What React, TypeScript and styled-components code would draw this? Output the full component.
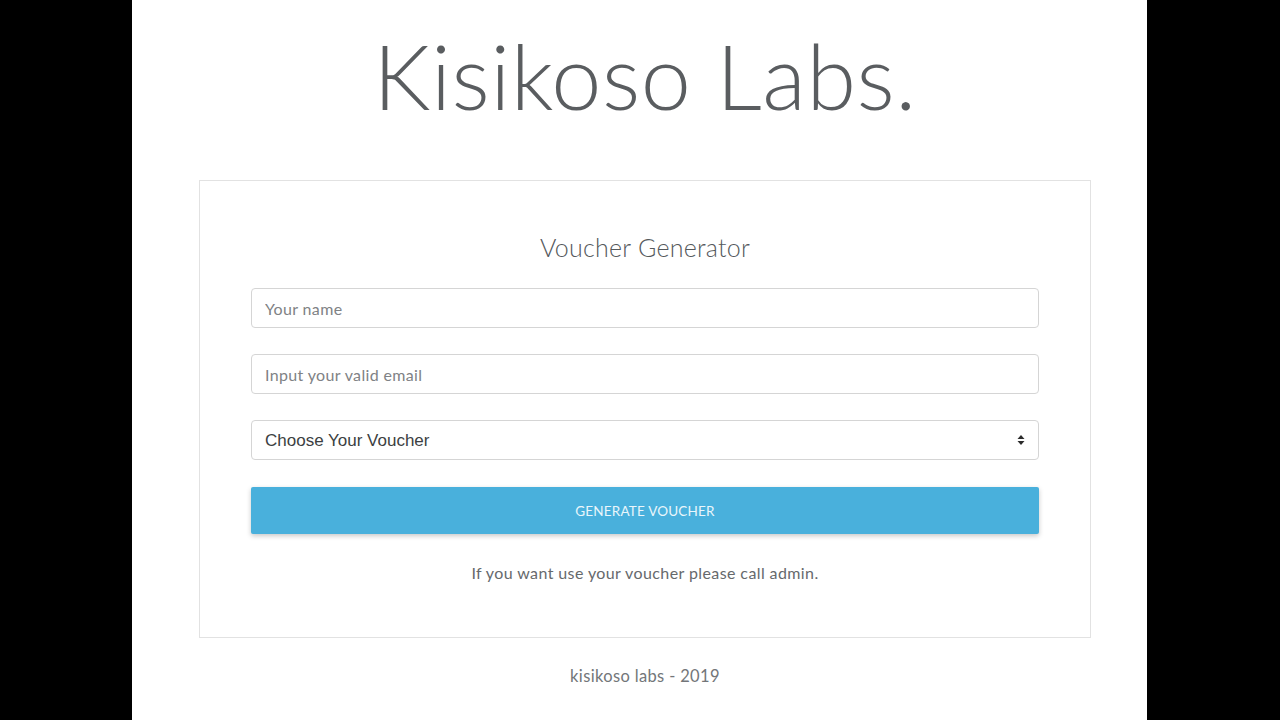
import React from 'react';
import styled, { createGlobalStyle } from 'styled-components';

const GlobalStyle = createGlobalStyle`
  html, body {
    margin: 0;
    padding: 0;
    background: #000;
    font-family: 'Lato', 'Noto Sans', sans-serif;
  }
  * { box-sizing: border-box; }
`;

const Column = styled.div`
  margin-left: 132px;
  width: 1015px;
  min-height: 720px;
  background: #fff;
  padding: 30px 56px 20px 67px;
`;

const Title = styled.h1`
  margin: 0 0 60px;
  font-size: 90px;
  line-height: 90px;
  font-weight: 300;
  color: #5a5d60;
  text-align: center;
  letter-spacing: 0.5px;
`;

const Card = styled.div`
  border: 1px solid #e2e2e2;
  padding: 51px 51px 54px;
  display: flex;
  flex-direction: column;
`;

const CardTitle = styled.h2`
  margin: 0 0 26px;
  font-size: 25px;
  line-height: 30px;
  font-weight: 300;
  letter-spacing: 0.25px;
  color: #55595c;
  text-align: center;
`;

const Field = styled.input`
  height: 40px;
  width: 100%;
  border: 1px solid #d5d5d5;
  border-radius: 4px;
  padding: 0 13px;
  font-family: 'Lato', sans-serif;
  font-size: 16px;
  letter-spacing: 0.35px;
  color: #444;
  margin-bottom: 26px;
  &::placeholder { color: #808285; }
`;

const SelectWrap = styled.div`
  position: relative;
  margin-bottom: 27px;
`;

const Select = styled.select`
  appearance: none;
  height: 40px;
  width: 100%;
  border: 1px solid #d5d5d5;
  border-radius: 4px;
  background: #fff;
  padding: 0 13px;
  font-family: 'Liberation Sans', Arial, sans-serif;
  font-size: 17px;
  color: #3c3f42;
`;

const Arrows = styled.svg`
  position: absolute;
  right: 14px;
  top: 14px;
  pointer-events: none;
`;

const Button = styled.button`
  height: 47px;
  width: 100%;
  border: none;
  border-radius: 2px;
  background: #49b0dc;
  color: #eaf6fb;
  font-family: 'Lato', sans-serif;
  font-size: 13.5px;
  text-transform: uppercase;
  letter-spacing: 0.2px;
  box-shadow: 0 2px 5px rgba(0, 0, 0, 0.22);
  cursor: pointer;
`;

const Note = styled.p`
  margin: 29px 0 0;
  font-size: 16px;
  line-height: 20px;
  letter-spacing: 0.4px;
  color: #66696c;
  text-align: center;
`;

const Footer = styled.p`
  margin: 28px 0 0;
  font-size: 16.5px;
  line-height: 20px;
  letter-spacing: 0.35px;
  color: #737679;
  text-align: center;
`;

export default function App() {
  return (
    <>
      <GlobalStyle />
      <Column>
        <Title>Kisikoso Labs.</Title>
        <Card>
          <CardTitle>Voucher Generator</CardTitle>
          <Field type="text" placeholder="Your name" />
          <Field type="email" placeholder="Input your valid email" />
          <SelectWrap>
            <Select defaultValue="">
              <option value="" disabled>Choose Your Voucher</option>
            </Select>
            <Arrows width="8" height="12" viewBox="0 0 8 12">
              <path d="M4 1 L7.5 5 H0.5 Z M4 11 L0.5 7 H7.5 Z" fill="#2b2b2b" />
            </Arrows>
          </SelectWrap>
          <Button>Generate Voucher</Button>
          <Note>If you want use your voucher please call admin.</Note>
        </Card>
        <Footer>kisikoso labs - 2019</Footer>
      </Column>
    </>
  );
}
